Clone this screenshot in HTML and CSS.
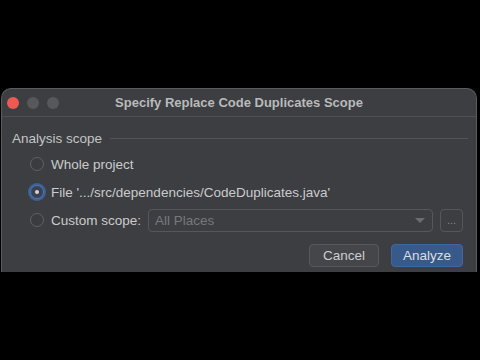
FILE: index.html
```html
<!DOCTYPE html>
<html lang="en">
<head>
  <meta charset="UTF-8">
  <meta name="viewport" content="width=device-width, initial-scale=1.0">
  <title>Specify Replace Code Duplicates Scope</title>
  <link rel="stylesheet" href="styles.css">
</head>
<body>
  <div class="dialog">
    <div class="titlebar">
      <div class="lights">
        <span class="light red"></span>
        <span class="light"></span>
        <span class="light"></span>
      </div>
      <div class="title">Specify Replace Code Duplicates Scope</div>
      <div></div>
    </div>

    <div class="content">
      <div class="group-header">
        <span>Analysis scope</span>
        <span class="rule"></span>
      </div>

      <div class="options">
        <label class="option">
          <span class="radio"></span>
          <span>Whole project</span>
        </label>
        <label class="option">
          <span class="radio checked"></span>
          <span>File '.../src/dependencies/CodeDuplicates.java'</span>
        </label>
        <div class="option custom">
          <span class="radio"></span>
          <span>Custom scope:</span>
          <div class="combo">
            <span>All Places</span>
            <span class="arrow"></span>
          </div>
          <div class="browse">...</div>
        </div>
      </div>

      <div class="actions">
        <button class="btn">Cancel</button>
        <button class="btn primary">Analyze</button>
      </div>
    </div>
  </div>
</body>
</html>
```

FILE: styles.css
```css
body {
  margin: 0;
  padding: 88px 0 0 1px;
  background: #000;
  font-family: "Liberation Sans", Arial, sans-serif;
  font-size: 13.5px;
  height: 360px;
  box-sizing: border-box;
  overflow: hidden;
}
.dialog {
  width: 476px;
  height: 184px;
  box-sizing: border-box;
  background: #3c3e41;
  border: 1px solid #5a5c5f;
  border-bottom: none;
  border-radius: 10px 10px 0 0;
}
.titlebar {
  height: 28px;
  box-sizing: border-box;
  border-bottom: 1px solid #4d4f52;
  display: grid;
  grid-template-columns: 1fr auto 1fr;
  align-items: center;
}
.lights {
  display: flex;
  gap: 8px;
  padding-left: 5px;
}
.light {
  width: 12px;
  height: 12px;
  border-radius: 50%;
  background: #56585b;
}
.light.red {
  background: #ee5a52;
}
.title {
  font-weight: bold;
  color: #b9babb;
  font-size: 13px;
}
.content {
  padding: 11px 8px 0 10px;
}
.group-header {
  display: flex;
  align-items: center;
  gap: 8px;
  height: 20px;
  color: #c4c5c7;
}
.rule {
  flex: 1;
  height: 1px;
  background: #515356;
}
.options {
  margin: 2px 0 0 18px;
}
.option {
  display: flex;
  align-items: center;
  gap: 7px;
  height: 28px;
  color: #cbcccd;
}
.option.custom {
  padding-right: 5px;
}
.radio {
  width: 14px;
  height: 14px;
  box-sizing: border-box;
  border-radius: 50%;
  border: 1px solid #606266;
  background: #3a3c3f;
  flex: none;
  display: flex;
  align-items: center;
  justify-content: center;
}
.radio.checked {
  border-color: #4a77b3;
  box-shadow: 0 0 0 2px #3d6296;
  background: #3b4150;
}
.radio.checked::after {
  content: "";
  width: 4px;
  height: 4px;
  border-radius: 50%;
  background: #d4d5d6;
}
.combo {
  flex: 1;
  height: 23px;
  box-sizing: border-box;
  border: 1px solid #55575a;
  border-radius: 4px;
  display: flex;
  align-items: center;
  justify-content: space-between;
  padding: 0 7px 0 6px;
  color: #76797c;
}
.arrow {
  width: 0;
  height: 0;
  border-left: 5px solid transparent;
  border-right: 5px solid transparent;
  border-top: 5px solid #6b6e71;
}
.browse {
  width: 23px;
  height: 23px;
  box-sizing: border-box;
  border: 1px solid #55575a;
  border-radius: 4px;
  color: #85888b;
  font-size: 11px;
  display: flex;
  align-items: center;
  justify-content: center;
}
.actions {
  display: flex;
  justify-content: flex-end;
  gap: 12px;
  margin-top: 10px;
  padding-right: 5px;
}
.btn {
  height: 23px;
  padding: 0 13px;
  border-radius: 4px;
  border: 1px solid #56585b;
  background: #44464a;
  color: #cdcecf;
  font-family: inherit;
  font-size: 13.5px;
}
.btn.primary {
  background: #375a8b;
  border-color: #4068a0;
  color: #dcdde0;
  padding: 0 11px;
}
```
